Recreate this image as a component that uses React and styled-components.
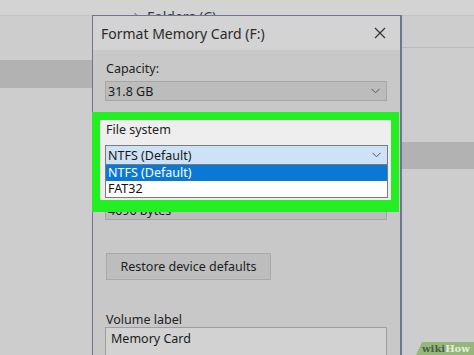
import styled, { createGlobalStyle } from 'styled-components'

const Global = createGlobalStyle`
  html, body { margin: 0; padding: 0; }
  body {
    width: 474px;
    height: 355px;
    overflow: hidden;
    background: #cfcfcf;
    font-family: "Noto Sans", "Open Sans", sans-serif;
  }
`

const Screen = styled.div`
  position: relative;
  width: 474px;
  height: 355px;
  overflow: hidden;
  background: #cdcdcd;
`

const TopStrip = styled.div`
  height: 15px;
  background: #d3d3d3;
  border-bottom: 1px solid #c2c2c2;
  overflow: hidden;
  padding-left: 133px;
`

const TreeItem = styled.div`
  margin-top: 8px;
  font-size: 14px;
  line-height: 18px;
  color: #3a3a3a;
`

const Desk = styled.div`
  display: grid;
  grid-template-columns: 92px 310px 1fr;
  margin-top: -1px;
`

const LeftPane = styled.div`
  padding-top: 45px;
`

const RightPane = styled.div`
  padding-top: 32px;
`

const Band = styled.div`
  height: ${p => p.h}px;
  margin-top: ${p => p.gap}px;
  background: #b2b2b2;
`

const Rule = styled.div`
  height: 1px;
  background: #bcbcbc;
`

const Dialog = styled.div`
  height: 345px;
  border: 1px solid #6f7395;
  border-right-width: 2px;
  border-bottom: none;
  background: #c8c8c8;
  display: flex;
  flex-direction: column;
`

const TitleBar = styled.div`
  height: 34px;
  flex: none;
  display: flex;
  align-items: center;
  justify-content: space-between;
  padding: 0 14px 0 8px;
  background: #d3d3d3;
`

const Title = styled.span`
  font-size: 14px;
  color: #2a2a2a;
`

const Body = styled.div`
  padding: 10px 13px 0 12px;
  display: flex;
  flex-direction: column;
`

const Label = styled.div`
  font-size: 12.5px;
  line-height: 18px;
  color: #222;
  padding-left: 1px;
  margin-top: ${p => p.top || 0}px;
`

const Select = styled.div`
  height: 20px;
  box-sizing: border-box;
  margin-top: ${p => p.top || 0}px;
  display: flex;
  align-items: center;
  justify-content: space-between;
  padding: 0 6px 0 2px;
  font-size: 12.5px;
  color: #1a1a1a;
  background: ${p => p.open ? '#cde3f5' : '#bcbcbc'};
  border: 1px solid ${p => p.open ? '#7b7b7b' : '#a6a6a6'};
`

const Highlight = styled.div`
  position: relative;
  z-index: 1;
  margin: 11px -12px 0 -13px;
  border: 8px solid #23ef23;
  border-bottom-width: 12px;
  background: #eeeeee;
  padding: 1px 3px 2px 5px;
`

const Combo = styled.div`
  display: flex;
  flex-direction: column;
  margin-top: 6px;
`

const List = styled.div`
  background: #ffffff;
  border: 1px solid #7b7b7b;
  border-top: none;
`

const Option = styled.div`
  height: 16px;
  line-height: 16px;
  padding-left: 2px;
  font-size: 12.5px;
  color: ${p => p.active ? '#ffffff' : '#111'};
  background: ${p => p.active ? '#0a78d4' : 'transparent'};
`

const Button = styled.div`
  align-self: flex-start;
  margin: 33px 0 0 1px;
  width: 165px;
  height: 27px;
  box-sizing: border-box;
  display: flex;
  align-items: center;
  justify-content: center;
  font-size: 12.5px;
  color: #1e1e1e;
  background: #bdbdbd;
  border: 1px solid #a9a9a9;
`

const TextBox = styled.div`
  height: 30px;
  margin-top: -2px;
  box-sizing: border-box;
  padding: 2px 5px;
  font-size: 12.5px;
  color: #1a1a1a;
  background: #d2d2d2;
  border: 1px solid #9e9e9e;
  border-bottom: none;
`

const Watermark = styled.div`
  position: absolute;
  right: 0;
  bottom: 0;
  width: 52px;
  height: 13px;
  padding-left: 6px;
  background: #95b77c;
  clip-path: polygon(6px 0, 100% 0, 100% 100%, 0 100%);
  font-family: "DejaVu Serif", "Liberation Serif", serif;
  font-weight: bold;
  font-size: 10px;
  line-height: 14px;
`

const Wiki = styled.span`
  color: #4d5d44;
`

const How = styled.span`
  color: #e6eedf;
`

function Chevron() {
  return (
    <svg width="9" height="6" viewBox="0 0 9 6">
      <path d="M0.5 0.8 L4.5 4.8 L8.5 0.8" fill="none" stroke="#555" strokeWidth="1" />
    </svg>
  )
}

function CloseIcon() {
  return (
    <svg width="12" height="12" viewBox="0 0 12 12">
      <path d="M1 1 L11 11 M11 1 L1 11" stroke="#333" strokeWidth="1.2" />
    </svg>
  )
}

function FolderArrow() {
  return (
    <svg width="8" height="10" viewBox="0 0 8 10" style={{ marginRight: 6 }}>
      <path d="M1.5 1 L5.5 5 L1.5 9" fill="none" stroke="#555" strokeWidth="1" />
    </svg>
  )
}

export default function App() {
  return (
    <Screen>
      <Global />
      <TopStrip>
        <TreeItem><FolderArrow />Folders (C)</TreeItem>
      </TopStrip>
      <Desk>
        <LeftPane>
          <Band h={28} gap={0} />
        </LeftPane>
        <Dialog>
          <TitleBar>
            <Title>Format Memory Card (F:)</Title>
            <CloseIcon />
          </TitleBar>
          <Body>
            <Label>Capacity:</Label>
            <Select top={3}>31.8 GB<Chevron /></Select>
            <Highlight>
              <Label>File system</Label>
              <Combo>
                <Select open>NTFS (Default)<Chevron /></Select>
                <List>
                  <Option active>NTFS (Default)</Option>
                  <Option>FAT32</Option>
                </List>
              </Combo>
            </Highlight>
            <Select top={-12}>4096 bytes<Chevron /></Select>
            <Button>Restore device defaults</Button>
            <Label top={31}>Volume label</Label>
            <TextBox>Memory Card</TextBox>
          </Body>
        </Dialog>
        <RightPane>
          <Rule />
          <Band h={27} gap={94} />
        </RightPane>
      </Desk>
      <Watermark><Wiki>wiki</Wiki><How>How</How></Watermark>
    </Screen>
  )
}
